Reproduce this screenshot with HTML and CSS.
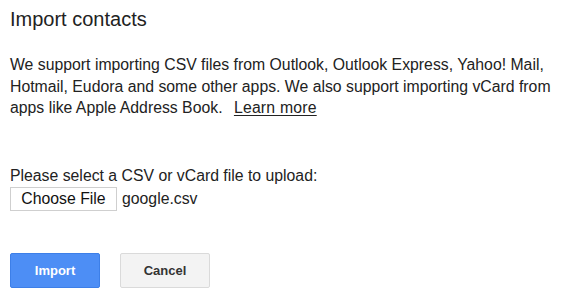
FILE: index.html
```html
<!DOCTYPE html>
<html>
<head>
<meta charset="utf-8">
<link rel="stylesheet" href="styles.css">
</head>
<body>
<div class="page">
  <h1 class="title">Import contacts</h1>
  <p class="desc">We support importing CSV files from Outlook, Outlook Express, Yahoo! Mail, Hotmail, Eudora and some other apps. We also support importing vCard from apps like Apple Address Book. <a class="link" href="#">Learn more</a></p>
  <div class="upload">
    <div class="label">Please select a CSV or vCard file to upload:</div>
    <div class="file-row">
      <span class="choose">Choose File</span>
      <span class="filename">google.csv</span>
    </div>
  </div>
  <div class="actions">
    <span class="btn btn-primary">Import</span>
    <span class="btn btn-secondary">Cancel</span>
  </div>
</div>
</body>
</html>
```
FILE: styles.css
```css
html, body {
  margin: 0;
  padding: 0;
  background: #fff;
}
.page {
  padding: 6px 10px 0 10px;
  font-family: "Liberation Sans", Arial, sans-serif;
  color: #222;
}
.title {
  margin: 0;
  font-size: 20px;
  font-weight: normal;
  line-height: 26px;
  color: #222;
}
.desc {
  margin: 22px 0 0 0;
  font-size: 15.8px;
  line-height: 21.5px;
}
.link {
  color: #222;
  text-decoration: underline;
  text-underline-offset: 2px;
  margin-left: 7px;
  letter-spacing: 0.2px;
}
.upload {
  margin-top: 47px;
  font-size: 15.8px;
}
.label {
  line-height: 20px;
}
.file-row {
  display: flex;
  align-items: center;
  gap: 5px;
  margin-top: 1px;
}
.choose {
  display: inline-block;
  box-sizing: border-box;
  width: 107px;
  height: 24px;
  text-align: center;
  line-height: 22px;
  border: 1px solid #cfcfcf;
  background: #fff;
  color: #111;
}
.actions {
  display: flex;
  gap: 20px;
  margin-top: 42px;
}
.btn {
  box-sizing: border-box;
  width: 90px;
  height: 35px;
  border-radius: 2px;
  font-size: 13px;
  font-weight: bold;
  display: flex;
  align-items: center;
  justify-content: center;
}
.btn-primary {
  background: #4d8ef5;
  border: 1px solid #3d7fe8;
  color: #fff;
}
.btn-secondary {
  background: #f3f3f3;
  border: 1px solid #dadada;
  color: #333;
}
```
